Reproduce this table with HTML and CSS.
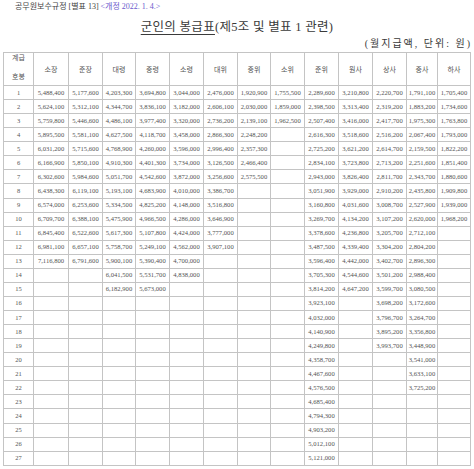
FILE: index.html
```html
<!DOCTYPE html>
<html lang="ko">
<head>
<meta charset="utf-8">
<link rel="stylesheet" href="styles.css">
</head>
<body>
<div class="ref">공무원보수규정 [별표 13] <span class="rev">&lt;개정 2022. 1. 4.&gt;</span></div>
<div class="title"><span class="ul">군인의 봉급표</span>(제5조 및 별표 1 관련)</div>
<div class="unit">(월지급액, 단위: 원)</div>
<table class="pay">
<colgroup>
<col class="c0"><col class="c1"><col class="c2"><col class="c3"><col class="c4"><col class="c5"><col class="c6"><col class="c7"><col class="c8"><col class="c9"><col class="c10"><col class="c11"><col class="c12"><col class="c13">
</colgroup>
<thead>
<tr class="head">
<th class="corner"><span>계급</span><span>호봉</span></th>
<th>소장</th><th>준장</th><th>대령</th><th>중령</th><th>소령</th><th>대위</th><th>중위</th><th>소위</th><th>준위</th><th>원사</th><th>상사</th><th>중사</th><th>하사</th>
</tr>
</thead>
<tbody>
<tr><td class="n">1</td><td>5,488,400</td><td>5,177,600</td><td>4,203,300</td><td>3,694,800</td><td>3,044,000</td><td>2,476,000</td><td>1,920,900</td><td>1,755,500</td><td>2,289,600</td><td>3,210,800</td><td>2,220,700</td><td>1,791,100</td><td>1,705,400</td></tr>
<tr><td class="n">2</td><td>5,624,100</td><td>5,312,100</td><td>4,344,700</td><td>3,836,100</td><td>3,182,000</td><td>2,606,100</td><td>2,030,000</td><td>1,859,000</td><td>2,398,500</td><td>3,313,400</td><td>2,319,200</td><td>1,883,200</td><td>1,734,600</td></tr>
<tr><td class="n">3</td><td>5,759,800</td><td>5,446,600</td><td>4,486,100</td><td>3,977,400</td><td>3,320,000</td><td>2,736,200</td><td>2,139,100</td><td>1,962,500</td><td>2,507,400</td><td>3,416,000</td><td>2,417,700</td><td>1,975,300</td><td>1,763,800</td></tr>
<tr><td class="n">4</td><td>5,895,500</td><td>5,581,100</td><td>4,627,500</td><td>4,118,700</td><td>3,458,000</td><td>2,866,300</td><td>2,248,200</td><td></td><td>2,616,300</td><td>3,518,600</td><td>2,516,200</td><td>2,067,400</td><td>1,793,000</td></tr>
<tr><td class="n">5</td><td>6,031,200</td><td>5,715,600</td><td>4,768,900</td><td>4,260,000</td><td>3,596,000</td><td>2,996,400</td><td>2,357,300</td><td></td><td>2,725,200</td><td>3,621,200</td><td>2,614,700</td><td>2,159,500</td><td>1,822,200</td></tr>
<tr><td class="n">6</td><td>6,166,900</td><td>5,850,100</td><td>4,910,300</td><td>4,401,300</td><td>3,734,000</td><td>3,126,500</td><td>2,466,400</td><td></td><td>2,834,100</td><td>3,723,800</td><td>2,713,200</td><td>2,251,600</td><td>1,851,400</td></tr>
<tr><td class="n">7</td><td>6,302,600</td><td>5,984,600</td><td>5,051,700</td><td>4,542,600</td><td>3,872,000</td><td>3,256,600</td><td>2,575,500</td><td></td><td>2,943,000</td><td>3,826,400</td><td>2,811,700</td><td>2,343,700</td><td>1,880,600</td></tr>
<tr><td class="n">8</td><td>6,438,300</td><td>6,119,100</td><td>5,193,100</td><td>4,683,900</td><td>4,010,000</td><td>3,386,700</td><td></td><td></td><td>3,051,900</td><td>3,929,000</td><td>2,910,200</td><td>2,435,800</td><td>1,909,800</td></tr>
<tr><td class="n">9</td><td>6,574,000</td><td>6,253,600</td><td>5,334,500</td><td>4,825,200</td><td>4,148,000</td><td>3,516,800</td><td></td><td></td><td>3,160,800</td><td>4,031,600</td><td>3,008,700</td><td>2,527,900</td><td>1,939,000</td></tr>
<tr><td class="n">10</td><td>6,709,700</td><td>6,388,100</td><td>5,475,900</td><td>4,966,500</td><td>4,286,000</td><td>3,646,900</td><td></td><td></td><td>3,269,700</td><td>4,134,200</td><td>3,107,200</td><td>2,620,000</td><td>1,968,200</td></tr>
<tr><td class="n">11</td><td>6,845,400</td><td>6,522,600</td><td>5,617,300</td><td>5,107,800</td><td>4,424,000</td><td>3,777,000</td><td></td><td></td><td>3,378,600</td><td>4,236,800</td><td>3,205,700</td><td>2,712,100</td><td></td></tr>
<tr><td class="n">12</td><td>6,981,100</td><td>6,657,100</td><td>5,758,700</td><td>5,249,100</td><td>4,562,000</td><td>3,907,100</td><td></td><td></td><td>3,487,500</td><td>4,339,400</td><td>3,304,200</td><td>2,804,200</td><td></td></tr>
<tr><td class="n">13</td><td>7,116,800</td><td>6,791,600</td><td>5,900,100</td><td>5,390,400</td><td>4,700,000</td><td></td><td></td><td></td><td>3,596,400</td><td>4,442,000</td><td>3,402,700</td><td>2,896,300</td><td></td></tr>
<tr><td class="n">14</td><td></td><td></td><td>6,041,500</td><td>5,531,700</td><td>4,838,000</td><td></td><td></td><td></td><td>3,705,300</td><td>4,544,600</td><td>3,501,200</td><td>2,988,400</td><td></td></tr>
<tr><td class="n">15</td><td></td><td></td><td>6,182,900</td><td>5,673,000</td><td></td><td></td><td></td><td></td><td>3,814,200</td><td>4,647,200</td><td>3,599,700</td><td>3,080,500</td><td></td></tr>
<tr><td class="n">16</td><td></td><td></td><td></td><td></td><td></td><td></td><td></td><td></td><td>3,923,100</td><td></td><td>3,698,200</td><td>3,172,600</td><td></td></tr>
<tr><td class="n">17</td><td></td><td></td><td></td><td></td><td></td><td></td><td></td><td></td><td>4,032,000</td><td></td><td>3,796,700</td><td>3,264,700</td><td></td></tr>
<tr><td class="n">18</td><td></td><td></td><td></td><td></td><td></td><td></td><td></td><td></td><td>4,140,900</td><td></td><td>3,895,200</td><td>3,356,800</td><td></td></tr>
<tr><td class="n">19</td><td></td><td></td><td></td><td></td><td></td><td></td><td></td><td></td><td>4,249,800</td><td></td><td>3,993,700</td><td>3,448,900</td><td></td></tr>
<tr><td class="n">20</td><td></td><td></td><td></td><td></td><td></td><td></td><td></td><td></td><td>4,358,700</td><td></td><td></td><td>3,541,000</td><td></td></tr>
<tr><td class="n">21</td><td></td><td></td><td></td><td></td><td></td><td></td><td></td><td></td><td>4,467,600</td><td></td><td></td><td>3,633,100</td><td></td></tr>
<tr><td class="n">22</td><td></td><td></td><td></td><td></td><td></td><td></td><td></td><td></td><td>4,576,500</td><td></td><td></td><td>3,725,200</td><td></td></tr>
<tr><td class="n">23</td><td></td><td></td><td></td><td></td><td></td><td></td><td></td><td></td><td>4,685,400</td><td></td><td></td><td></td><td></td></tr>
<tr><td class="n">24</td><td></td><td></td><td></td><td></td><td></td><td></td><td></td><td></td><td>4,794,300</td><td></td><td></td><td></td><td></td></tr>
<tr><td class="n">25</td><td></td><td></td><td></td><td></td><td></td><td></td><td></td><td></td><td>4,903,200</td><td></td><td></td><td></td><td></td></tr>
<tr><td class="n">26</td><td></td><td></td><td></td><td></td><td></td><td></td><td></td><td></td><td>5,012,100</td><td></td><td></td><td></td><td></td></tr>
<tr><td class="n">27</td><td></td><td></td><td></td><td></td><td></td><td></td><td></td><td></td><td>5,121,000</td><td></td><td></td><td></td><td></td></tr>
</tbody>
</table>
</body>
</html>
```
FILE: styles.css
```css
html, body {
  margin: 0;
  padding: 0;
  background: #ffffff;
}
body {
  font-family: "Liberation Serif", "Noto Sans CJK KR", serif;
  color: #333333;
}
.ref {
  font-size: 8px;
  line-height: 14px;
  padding-left: 15px;
  color: #444444;
}
.rev {
  color: #6a5acd;
}
.title {
  margin-top: 3px;
  font-size: 12.5px;
  line-height: 20px;
  text-align: center;
  color: #3a3a3a;
  font-weight: normal;
  letter-spacing: 0.3px;
}
.ul {
  text-decoration: underline;
  text-underline-offset: 3px;
  text-decoration-thickness: 1px;
}
.unit {
  font-size: 10px;
  line-height: 14px;
  text-align: right;
  padding-right: 2px;
  letter-spacing: 2px;
  font-weight: normal;
  color: #3a3a3a;
}
.pay {
  margin: 1px 0 0 3px;
  width: 467px;
  border-collapse: collapse;
  table-layout: fixed;
}
.c0 { width: 30px; }
.c1 { width: 35px; }
.c2, .c4, .c5, .c6, .c8, .c9, .c10, .c11 { width: 34px; }
.c3, .c7, .c13 { width: 33px; }
.c12 { width: 31px; }
.pay th, .pay td {
  border: 1px solid #c4c4c4;
  padding: 0;
  overflow: hidden;
  white-space: nowrap;
}
.pay th {
  height: 32px;
  font-weight: normal;
  font-size: 7px;
  color: #555555;
  text-align: center;
  vertical-align: middle;
}
.pay th.corner {
  vertical-align: top;
}
.corner {
  font-size: 6.5px;
}
.corner span {
  display: block;
  line-height: 10px;
}
.corner span + span {
  margin-top: 9px;
}
.pay td {
  height: 13.07px;
  font-size: 6.6px;
  line-height: 8px;
  text-align: center;
  color: #555555;
}
.pay td.n {
  font-size: 6.5px;
}
```
